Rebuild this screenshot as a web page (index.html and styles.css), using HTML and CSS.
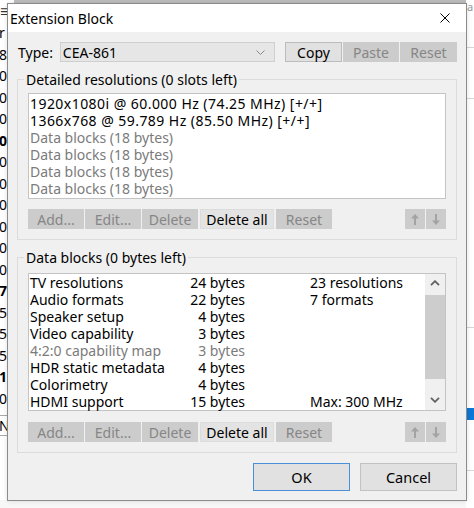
FILE: index.html
```html
<!DOCTYPE html>
<html lang="en">
<head>
    <meta charset="utf-8" />
    <title>Extension Block</title>
    <link rel="stylesheet" href="styles.css">
</head>
<body>
    <div class="desk">
        <div class="back-top"></div>
        <div class="back-left">
            <span class="icon">&#8801;</span>
            <span>r</span>
            <span>8</span>
            <span>0</span>
            <span>0</span>
            <span>0</span>
            <span class="bold">0</span>
            <span>0</span>
            <span>0</span>
            <span>0</span>
            <span>0</span>
            <span>0</span>
            <span>0</span>
            <span class="bold">7</span>
            <span>5</span>
            <span>5</span>
            <span>5</span>
            <span class="bold">1</span>
            <span>0</span>
            <span class="boxed">N</span>
        </div>
        <div class="back-right">
            <div class="br-text">a</div>
            <div class="br-line first"></div>
            <div class="br-line"></div>
            <div class="br-line tall"></div>
            <div class="br-sel"></div>
            <div class="br-line"></div>
        </div>

        <div class="dialog">
            <div class="titlebar">
                <span class="title">Extension Block</span>
                <svg class="close" width="10" height="10" viewBox="0 0 10 10">
                    <path d="M0.5 0.5 L9.5 9.5 M9.5 0.5 L0.5 9.5" stroke="#000" stroke-width="1" fill="none"/>
                </svg>
            </div>

            <div class="content">
                <div class="type-row">
                    <span class="type-label">Type:</span>
                    <div class="combo">
                        <span>CEA-861</span>
                        <svg width="9" height="5" viewBox="0 0 9 5">
                            <path d="M0.5 0.5 L4.5 4.5 L8.5 0.5" stroke="#8a8a8a" fill="none"/>
                        </svg>
                    </div>
                    <div class="btn-set">
                        <button class="btn wide">Copy</button>
                        <button class="btn off">Paste</button>
                        <button class="btn off wide">Reset</button>
                    </div>
                </div>

                <!-- detailed resolutions -->
                <div class="group">
                    <div class="group-head"><span>Detailed resolutions (0 slots left)</span></div>
                    <div class="list res-list">
                        <div class="row mode">1920x1080i @ 60.000 Hz (74.25 MHz) [+/+]</div>
                        <div class="row mode">1366x768 @ 59.789 Hz (85.50 MHz) [+/+]</div>
                        <div class="row dim">Data blocks (18 bytes)</div>
                        <div class="row dim">Data blocks (18 bytes)</div>
                        <div class="row dim">Data blocks (18 bytes)</div>
                        <div class="row dim">Data blocks (18 bytes)</div>
                    </div>
                    <div class="tool-row">
                        <button class="btn off">Add...</button>
                        <button class="btn off">Edit...</button>
                        <button class="btn off">Delete</button>
                        <button class="btn flat del-all">Delete all</button>
                        <button class="btn off">Reset</button>
                        <div class="arrows">
                            <button class="btn off arrow">
                                <svg width="8" height="11" viewBox="0 0 8 11"><path d="M4 0 L8 4.5 L5 4.5 L5 11 L3 11 L3 4.5 L0 4.5 Z" fill="#a3a3a3"/></svg>
                            </button>
                            <button class="btn off arrow">
                                <svg width="8" height="11" viewBox="0 0 8 11"><path d="M4 11 L8 6.5 L5 6.5 L5 0 L3 0 L3 6.5 L0 6.5 Z" fill="#a3a3a3"/></svg>
                            </button>
                        </div>
                    </div>
                </div>

                <!-- data blocks -->
                <div class="group second">
                    <div class="group-head"><span>Data blocks (0 bytes left)</span></div>
                    <div class="list block-list">
                        <div class="rows">
                            <div class="row cols"><span>TV resolutions</span><span class="num">24 bytes</span><span class="info">23 resolutions</span></div>
                            <div class="row cols"><span>Audio formats</span><span class="num">22 bytes</span><span class="info">7 formats</span></div>
                            <div class="row cols"><span>Speaker setup</span><span class="num">4 bytes</span><span class="info"></span></div>
                            <div class="row cols"><span>Video capability</span><span class="num">3 bytes</span><span class="info"></span></div>
                            <div class="row cols dim"><span>4:2:0 capability map</span><span class="num">3 bytes</span><span class="info"></span></div>
                            <div class="row cols"><span>HDR static metadata</span><span class="num">4 bytes</span><span class="info"></span></div>
                            <div class="row cols"><span>Colorimetry</span><span class="num">4 bytes</span><span class="info"></span></div>
                            <div class="row cols"><span>HDMI support</span><span class="num">15 bytes</span><span class="info">Max: 300 MHz</span></div>
                        </div>
                        <div class="scrollbar">
                            <div class="sb-btn">
                                <svg width="10" height="6" viewBox="0 0 10 6"><path d="M1 5.2 L5 1.2 L9 5.2" stroke="#606060" stroke-width="1.8" fill="none"/></svg>
                            </div>
                            <div class="sb-thumb"></div>
                            <div class="sb-track"></div>
                            <div class="sb-btn">
                                <svg width="10" height="6" viewBox="0 0 10 6"><path d="M1 0.8 L5 4.8 L9 0.8" stroke="#606060" stroke-width="1.8" fill="none"/></svg>
                            </div>
                        </div>
                    </div>
                    <div class="tool-row">
                        <button class="btn off">Add...</button>
                        <button class="btn off">Edit...</button>
                        <button class="btn off">Delete</button>
                        <button class="btn flat del-all">Delete all</button>
                        <button class="btn off">Reset</button>
                        <div class="arrows">
                            <button class="btn off arrow">
                                <svg width="8" height="11" viewBox="0 0 8 11"><path d="M4 0 L8 4.5 L5 4.5 L5 11 L3 11 L3 4.5 L0 4.5 Z" fill="#a3a3a3"/></svg>
                            </button>
                            <button class="btn off arrow">
                                <svg width="8" height="11" viewBox="0 0 8 11"><path d="M4 11 L8 6.5 L5 6.5 L5 0 L3 0 L3 6.5 L0 6.5 Z" fill="#a3a3a3"/></svg>
                            </button>
                        </div>
                    </div>
                </div>

                <div class="footer">
                    <button class="btn big default">OK</button>
                    <button class="btn big">Cancel</button>
                </div>
            </div>
        </div>
    </div>
</body>
</html>
```

FILE: styles.css
```css
* {
    box-sizing: border-box;
}

body {
    margin: 0;
    background: #f7f7f7;
    font-family: "Noto Sans", sans-serif;
    font-size: 14px;
    color: #000;
}

.desk {
    position: relative;
    width: 474px;
    height: 508px;
    overflow: hidden;
}

/* window behind the dialog */
.back-top {
    height: 3px;
    background: #bdbdbd;
}

.back-left {
    position: absolute;
    left: 0;
    top: 0;
    width: 14px;
    height: 500px;
    display: flex;
    flex-direction: column;
    font-size: 14px;
    line-height: 21.5px;
    background: #fff;
}

.back-left span {
    display: block;
    margin-left: -1px;
}

.back-left .icon {
    font-size: 16px;
    line-height: 22px;
    margin-left: 0;
    color: #333;
}

.back-left .bold {
    font-weight: bold;
}

.back-left .boxed {
    border: 1px solid #aaa;
    border-left: none;
    line-height: 19px;
    margin-top: 6px;
}

.back-right {
    position: absolute;
    left: 466px;
    top: 0;
    width: 8px;
    height: 508px;
    background: #fff;
}

.br-text {
    color: #999;
    font-size: 11px;
    line-height: 14px;
    margin-left: 1px;
}

.br-line {
    height: 1px;
    background: #d6d6d6;
    margin-top: 50px;
}

.br-line.first {
    margin-top: 33px;
}

.br-line.tall {
    margin-top: 228px;
}

.br-sel {
    height: 12px;
    margin-top: 80px;
    background: #0a78d4;
}

/* dialog */
.dialog {
    position: absolute;
    left: 7px;
    top: 3px;
    width: 460px;
    height: 498px;
    border: 1px solid #8b8b8b;
    background: #f0f0f0;
    display: flex;
    flex-direction: column;
    box-shadow: 0 0 5px rgba(0, 0, 0, 0.12);
}

.titlebar {
    height: 28px;
    background: #fff;
    display: flex;
    align-items: center;
    padding-left: 2px;
}

.title {
    font-size: 14px;
}

.close {
    margin-left: auto;
    margin-right: 16px;
}

.content {
    padding: 0 9px;
}

button {
    font: inherit;
}

.btn {
    height: 20px;
    padding: 0;
    border: 1px solid #bcbcbc;
    background: #e1e1e1;
    color: #000;
    font-size: 14px;
    line-height: 17px;
    width: 56px;
}

.btn.wide {
    width: 57px;
}

.btn.off {
    background: #cccccc;
    border-color: #cccccc;
    color: #868686;
}

.btn.flat {
    border-color: #dcdcdc;
    background: #e3e3e3;
}

.type-row {
    display: flex;
    align-items: center;
    height: 20px;
    margin-top: 10px;
    padding-left: 1px;
}

.type-label {
    width: 42px;
}

.combo {
    width: 216px;
    height: 20px;
    border: 1px solid #cfcfcf;
    background: #e6e6e6;
    display: flex;
    align-items: center;
    padding: 0 9px 0 2px;
    justify-content: space-between;
}

.btn-set {
    display: flex;
    gap: 1px;
    margin-left: 10px;
}

/* group boxes */
.group {
    margin-top: 17px;
    border: 1px solid #dcdcdc;
    padding: 0 10px 10px 10px;
}

.group-head {
    height: 17px;
    margin-top: -9px;
    margin-left: -4px;
    line-height: 17px;
}

.group-head span {
    background: #f0f0f0;
    padding: 0 2px;
}

.list {
    background: #fff;
    border: 1px solid #c4c4c4;
}

.res-list {
    margin-top: 5px;
    height: 106px;
    padding-top: 1px;
}

.row {
    height: 17px;
    line-height: 17px;
    padding-left: 1px;
    white-space: nowrap;
}

.row.mode {
    letter-spacing: 0.45px;
}

.row.dim {
    color: #7b7b7b;
}

.block-list {
    margin-top: 7px;
    height: 138px;
    display: flex;
}

.rows {
    flex: 1;
}

.cols {
    display: grid;
    grid-template-columns: 140px 75px 1fr;
}

.cols .num {
    text-align: right;
}

.cols .info {
    padding-left: 65px;
}

.scrollbar {
    width: 20px;
    background: #f0f0f0;
    display: flex;
    flex-direction: column;
}

.sb-btn {
    height: 21px;
    display: flex;
    align-items: center;
    justify-content: center;
}

.sb-btn:first-child {
    padding-bottom: 3px;
}

.sb-thumb {
    height: 84px;
    background: #cdcdcd;
}

.sb-track {
    flex: 1;
}

.tool-row {
    display: flex;
    gap: 1px;
    margin-top: 10px;
}

.second .tool-row {
    margin-top: 11px;
}

.btn.del-all {
    width: 74px;
    margin: 0 1px;
}

.arrows {
    margin-left: auto;
    display: flex;
    gap: 1px;
}

.btn.arrow {
    width: 20px;
    display: flex;
    align-items: center;
    justify-content: center;
}

.footer {
    display: flex;
    justify-content: flex-end;
    gap: 10px;
    margin-top: 10px;
}

.btn.big {
    width: 97px;
    height: 28px;
    font-size: 14.5px;
    line-height: 25px;
    border-color: #c2c2c2;
}

.btn.default {
    border-color: #4a90d9;
}
```
